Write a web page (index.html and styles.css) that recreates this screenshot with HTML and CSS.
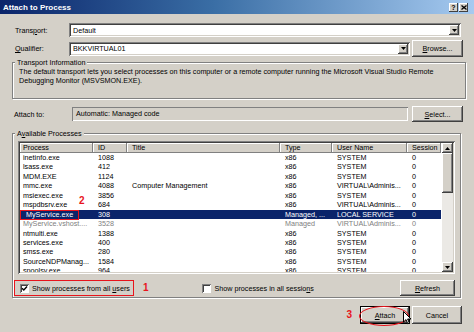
FILE: index.html
```html
<!DOCTYPE html>
<html>
<head>
    <link rel="stylesheet" href="styles.css">
</head>
<body>
<div id="dialog">
    <div class="titlebar">
        <span class="title">Attach to Process</span>
        <div class="caption-buttons">
            <span class="cap-btn">?</span>
            <span class="cap-btn"><svg width="6" height="5" viewBox="0 0 6 5"><path d="M0.5 0.5 L5.5 4.5 M5.5 0.5 L0.5 4.5" stroke="#000" stroke-width="1.3"/></svg></span>
        </div>
    </div>

    <div class="field-row transport-row">
        <span class="field-label">Trans<u>p</u>ort:</span>
        <div class="combo transport-combo">
            <span class="combo-text">Default</span>
            <span class="drop-btn"><svg width="5" height="3" viewBox="0 0 5 3"><polygon points="0,0 5,0 2.5,3" fill="#000"/></svg></span>
        </div>
    </div>

    <div class="field-row qualifier-row">
        <span class="field-label"><u>Q</u>ualifier:</span>
        <div class="combo qualifier-combo">
            <span class="combo-text">BKKVIRTUAL01</span>
            <span class="drop-btn"><svg width="5" height="3" viewBox="0 0 5 3"><polygon points="0,0 5,0 2.5,3" fill="#000"/></svg></span>
        </div>
        <button class="btn side-btn"><u>B</u>rowse...</button>
    </div>

    <fieldset class="group info-group">
        <legend>Transport Information</legend>
        <div class="info-text">The default transport lets you select processes on this computer or a remote computer running the Microsoft Visual Studio Remote<br>Debugging Monitor (MSVSMON.EXE).</div>
    </fieldset>

    <div class="field-row attach-row">
        <span class="field-label attach-label">Attach to:</span>
        <div class="readonly-field">Automatic: Managed code</div>
        <button class="btn side-btn select-btn"><u>S</u>elect...</button>
    </div>

    <fieldset class="group proc-group">
        <legend>A<u>v</u>ailable Processes</legend>
        <div class="proc-body">
            <div class="proc-list">
                <div class="proc-table">
                    <div class="proc-row header">
                        <span class="first">Process</span><span>ID</span><span>Title</span><span>Type</span><span>User Name</span><span>Session</span>
                    </div>
                    <div class="proc-row"><span class="first">inetinfo.exe</span><span>1088</span><span></span><span>x86</span><span>SYSTEM</span><span>0</span></div>
                    <div class="proc-row"><span class="first">lsass.exe</span><span>412</span><span></span><span>x86</span><span>SYSTEM</span><span>0</span></div>
                    <div class="proc-row"><span class="first">MDM.EXE</span><span>1124</span><span></span><span>x86</span><span>SYSTEM</span><span>0</span></div>
                    <div class="proc-row"><span class="first">mmc.exe</span><span>4088</span><span>Computer Management</span><span>x86</span><span>VIRTUAL\Adminis...</span><span>0</span></div>
                    <div class="proc-row"><span class="first">msiexec.exe</span><span>3856</span><span></span><span>x86</span><span>SYSTEM</span><span>0</span></div>
                    <div class="proc-row"><span class="first">mspdbsrv.exe</span><span>684</span><span></span><span>x86</span><span>VIRTUAL\Adminis...</span><span>0</span></div>
                    <div class="proc-row selected"><span class="first"><span class="mark-box">MyService.exe</span></span><span>308</span><span></span><span>Managed, ...</span><span>LOCAL SERVICE</span><span>0</span></div>
                    <div class="proc-row dimmed"><span class="first">MyService.vshost....</span><span>3528</span><span></span><span>Managed</span><span>VIRTUAL\Adminis...</span><span>0</span></div>
                    <div class="proc-row"><span class="first">ntmulti.exe</span><span>1388</span><span></span><span>x86</span><span>SYSTEM</span><span>0</span></div>
                    <div class="proc-row"><span class="first">services.exe</span><span>400</span><span></span><span>x86</span><span>SYSTEM</span><span>0</span></div>
                    <div class="proc-row"><span class="first">smss.exe</span><span>280</span><span></span><span>x86</span><span>SYSTEM</span><span>0</span></div>
                    <div class="proc-row"><span class="first">SourceNDPManag...</span><span>1584</span><span></span><span>x86</span><span>SYSTEM</span><span>0</span></div>
                    <div class="proc-row"><span class="first">spoolsv.exe</span><span>964</span><span></span><span>x86</span><span>SYSTEM</span><span>0</span></div>
                    <span class="note note-2">2</span>
                </div>
                <div class="scrollbar">
                    <span class="scroll-btn"><svg width="5" height="3" viewBox="0 0 5 3"><polygon points="0,3 5,3 2.5,0" fill="#000"/></svg></span>
                    <span class="scroll-thumb"></span>
                    <span class="scroll-track"></span>
                    <span class="scroll-btn"><svg width="5" height="3" viewBox="0 0 5 3"><polygon points="0,0 5,0 2.5,3" fill="#000"/></svg></span>
                </div>
            </div>

            <div class="check-row">
                <label class="check mark-check">
                    <span class="check-box"><svg width="7" height="7" viewBox="0 0 7 7"><polyline points="1,3.2 2.8,5 6,1.5" fill="none" stroke="#000" stroke-width="1.4"/></svg></span>
                    <span class="check-text">Show processes from all <u>u</u>sers</span>
                </label>
                <span class="note note-1">1</span>
                <label class="check sessions-check">
                    <span class="check-box"></span>
                    <span class="check-text">Show processes in all sessio<u>n</u>s</span>
                </label>
                <button class="btn refresh-btn"><u>R</u>efresh</button>
            </div>
        </div>
    </fieldset>

    <div class="dialog-buttons">
        <span class="note note-3">3</span>
        <div class="attach-wrap">
            <button class="btn default-btn"><u>A</u>ttach</button>
            <span class="ellipse"></span>
            <svg class="cursor" width="9" height="14" viewBox="0 0 9 14"><path d="M0.5 0.5 L0.5 11 L3 8.6 L4.8 12.8 L6.4 12.1 L4.6 8 L8 8 Z" fill="#fff" stroke="#000" stroke-width="1"/></svg>
        </div>
        <button class="btn cancel-btn">Cancel</button>
    </div>
</div>
</body>
</html>
```

FILE: styles.css
```css
body {
    margin: 0;
    background: #d4d0c8;
    font-family: "Liberation Sans", Arial, sans-serif;
    font-size: 7.2px;
    color: #000;
}

#dialog {
    width: 474px;
    height: 332px;
    overflow: hidden;
    background: #d4d0c8;
}

u {
    text-decoration-thickness: 1px;
    text-underline-offset: 1px;
}

/* title bar */
.titlebar {
    height: 14px;
    display: flex;
    align-items: center;
    justify-content: space-between;
    padding: 0 6px 0 3px;
    background: linear-gradient(to right, #0a246a 0%, #3a6ea5 45%, #a6caf0 100%);
}

.title {
    color: #fff;
    font-weight: bold;
    font-size: 8px;
}

.caption-buttons {
    display: flex;
    gap: 1px;
}

.cap-btn {
    width: 9px;
    height: 9px;
    display: flex;
    align-items: center;
    justify-content: center;
    font-size: 7px;
    font-weight: bold;
    background: #d4d0c8;
    box-shadow: inset -1px -1px #404040, inset 1px 1px #fff;
}

/* common controls */
.btn {
    font-family: inherit;
    font-size: 7.2px;
    color: #000;
    background: #d4d0c8;
    border: none;
    padding: 0;
    box-shadow: inset -1px -1px #404040, inset 1px 1px #fff, inset -2px -2px #808080;
}

.field-row {
    display: flex;
    align-items: center;
    padding-left: 15px;
}

.field-label {
    width: 54px;
}

.transport-row {
    margin-top: 9px;
    height: 14px;
    padding-right: 13px;
}

.qualifier-row {
    margin-top: 3px;
    height: 17px;
    padding-right: 11px;
}

.combo {
    height: 14px;
    display: flex;
    align-items: center;
    justify-content: space-between;
    background: #fff;
    padding: 2px;
    box-sizing: border-box;
    box-shadow: inset 1px 1px #808080, inset -1px -1px #fff, inset 2px 2px #404040, inset -2px -2px #d4d0c8;
}

.transport-combo {
    flex: 1;
}

.qualifier-combo {
    width: 341px;
}

.combo-text {
    padding-left: 2px;
}

.drop-btn {
    width: 10px;
    height: 10px;
    display: flex;
    align-items: center;
    justify-content: center;
    background: #d4d0c8;
    box-shadow: inset -1px -1px #404040, inset 1px 1px #fff, inset -2px -2px #808080;
}

.side-btn {
    width: 51px;
    height: 17px;
    margin-left: 2px;
}

/* group boxes */
.group {
    margin: 1px 8px 0 12px;
    padding: 0;
    border: 1px solid #808080;
    box-shadow: inset 1px 1px #fff, 1px 1px #fff;
    min-width: 0;
}

.group legend {
    margin-left: 2px;
    padding: 0 2px;
    line-height: 9px;
    background: #d4d0c8;
}

.info-text {
    white-space: nowrap;
    line-height: 8.5px;
    padding: 1px 0 13px 6px;
}

.attach-row {
    margin-top: 7px;
    height: 16px;
    padding-left: 14px;
}

.attach-label {
    width: 58px;
}

.readonly-field {
    width: 336px;
    height: 14px;
    line-height: 14px;
    padding-left: 4px;
    box-sizing: border-box;
    box-shadow: inset 1px 1px #808080, inset -1px -1px #fff;
}

.select-btn {
    height: 16px;
    margin-left: 4px;
}

.proc-group {
    margin-top: 7px;
    margin-right: 13px;
}

.proc-body {
    padding: 3px 5px 1px 5px;
}

/* process list */
.proc-list {
    height: 133px;
    display: flex;
    background: #fff;
    padding: 2px;
    box-sizing: border-box;
    box-shadow: inset 1px 1px #808080, inset -1px -1px #fff, inset 2px 2px #404040, inset -2px -2px #d4d0c8;
}

.proc-table {
    position: relative;
    flex: 1;
    overflow: hidden;
}

.proc-row {
    display: grid;
    grid-template-columns: 73px 34px 153px 52px 75px 34px;
    width: 421px;
    height: 9.45px;
    line-height: 9.45px;
    white-space: nowrap;
}

.proc-row span {
    padding-left: 5px;
    overflow: hidden;
}

.proc-row span.first {
    padding-left: 3px;
    overflow: visible;
}

.proc-row.header {
    height: 10px;
    line-height: 10px;
}

.proc-row.header span {
    background: #d4d0c8;
    box-shadow: inset -1px -1px #808080, inset 1px 1px #fff;
}

.proc-row.selected {
    background: #0a246a;
    color: #fff;
}

.proc-row.dimmed {
    color: #808080;
}

.mark-box {
    display: inline-block;
    width: 59px;
    height: 10px;
    line-height: 8px;
    margin-left: -3px;
    padding-left: 2px;
    box-sizing: border-box;
    border: 1px solid #e8141c;
    vertical-align: top;
}

.scrollbar {
    width: 11px;
    display: flex;
    flex-direction: column;
    margin-left: 1px;
}

.scroll-btn {
    height: 10px;
    display: flex;
    align-items: center;
    justify-content: center;
    background: #d4d0c8;
    box-shadow: inset -1px -1px #404040, inset 1px 1px #fff, inset -2px -2px #808080;
}

.scroll-thumb {
    height: 40px;
    background: #d4d0c8;
    box-shadow: inset -1px -1px #404040, inset 1px 1px #fff, inset -2px -2px #808080;
}

.scroll-track {
    flex: 1;
    background: #ebe9e5;
}

/* annotations */
.note {
    color: #e8141c;
    font-weight: bold;
    font-size: 10px;
    line-height: 10px;
}

.note-2 {
    position: absolute;
    left: 59px;
    top: 53px;
}

/* checkbox row */
.check-row {
    display: flex;
    align-items: center;
    height: 16px;
    margin-top: 6px;
}

.check {
    display: flex;
    align-items: center;
    flex-shrink: 0;
    white-space: nowrap;
}

.check-box {
    width: 9px;
    height: 9px;
    margin-right: 3px;
    display: flex;
    align-items: center;
    justify-content: center;
    background: #fff;
    box-shadow: inset 1px 1px #808080, inset -1px -1px #fff, inset 2px 2px #404040;
}

.mark-check {
    height: 16px;
    margin-left: -4px;
    padding: 0 3px 0 5px;
    box-sizing: border-box;
    border: 1px solid #e8141c;
}

.note-1 {
    margin-left: 9px;
}

.sessions-check {
    margin-left: 54px;
}

.refresh-btn {
    width: 55px;
    height: 16px;
    margin-left: auto;
}

/* dialog buttons */
.dialog-buttons {
    display: flex;
    align-items: center;
    justify-content: flex-end;
    margin-top: 8px;
    padding-right: 12px;
}

.note-3 {
    margin-right: 8px;
}

.attach-wrap {
    position: relative;
}

.default-btn {
    width: 50px;
    height: 18px;
    box-shadow: inset 0 0 0 1px #000, inset -2px -2px #404040, inset 2px 2px #fff, inset -3px -3px #808080;
}

.ellipse {
    position: absolute;
    left: -1px;
    top: 0;
    width: 50px;
    height: 20px;
    box-sizing: border-box;
    border: 1.5px solid #e8141c;
    border-radius: 50%;
}

.cursor {
    position: absolute;
    left: 43px;
    top: 5px;
}

.cancel-btn {
    width: 50px;
    height: 18px;
    margin-left: 2px;
}
```
